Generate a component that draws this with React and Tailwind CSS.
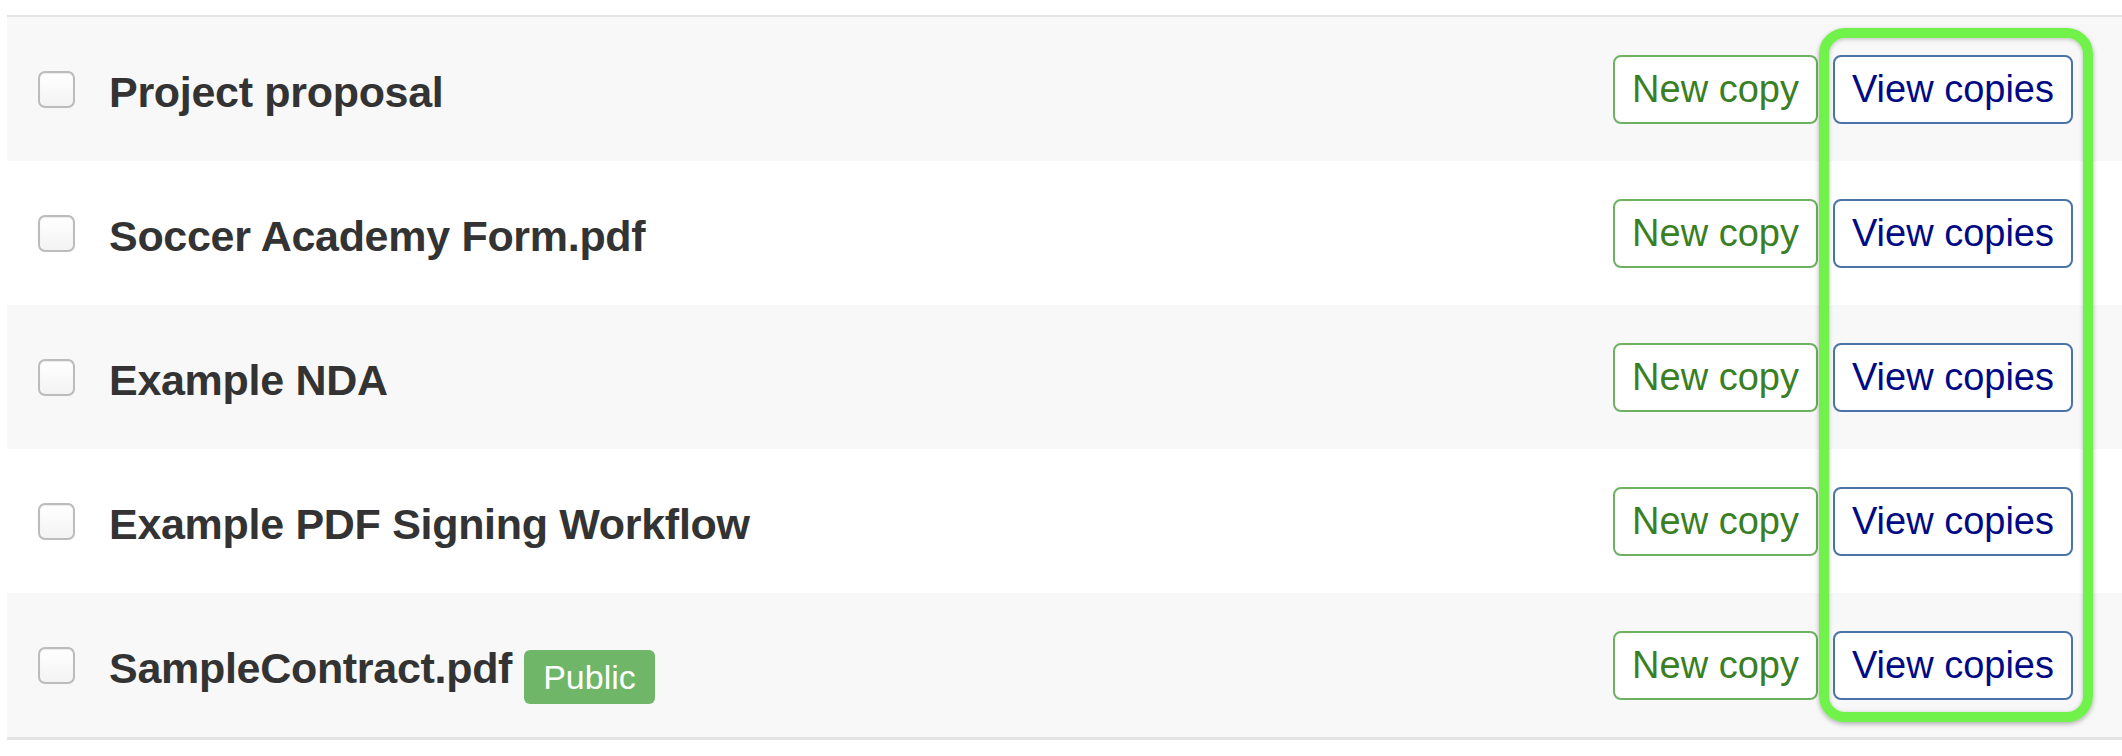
const ROWS = [
  { name: 'Project proposal', bg: 'bg-[#f8f8f8]' },
  { name: 'Soccer Academy Form.pdf', bg: 'bg-white' },
  { name: 'Example NDA', bg: 'bg-[#f8f8f8]' },
  { name: 'Example PDF Signing Workflow', bg: 'bg-white' },
  { name: 'SampleContract.pdf', bg: 'bg-[#f8f8f8]', isPublic: true },
];

function Checkbox() {
  return (
    <span className="w-[37px] h-[37px] shrink-0 rounded-[7px] border-2 border-[#bcbcbc] bg-gradient-to-b from-white to-[#f3f3f3] shadow-[inset_0_1px_1px_rgba(0,0,0,0.08)]"></span>
  );
}

export default function App() {
  return (
    <div className="relative w-[2122px] h-[756px] bg-white pt-[15px] pl-[7px] font-['Liberation_Sans',Arial,sans-serif]">
      <div className="border-t-2 border-b-[3px] border-[#e4e4e4]">
        {ROWS.map((row, i) => (
          <div key={i} className={`h-[144px] flex items-center pl-[31px] pr-[49px] ${row.bg}`}>
            <Checkbox />
            <div className="ml-[34px] flex items-baseline gap-[12px] translate-y-[3px]">
              <span className="text-[43px] font-bold text-[#333333] tracking-[-0.3px]">{row.name}</span>
              {row.isPublic && (
                <span className="inline-flex items-center h-[54px] px-[19px] rounded-[6px] bg-[#70b668] text-white text-[34px] leading-none translate-y-[6px]">
                  Public
                </span>
              )}
            </div>
            <div className="ml-auto flex items-center gap-[15px]">
              <button className="h-[69px] px-[17px] rounded-[8px] border-2 border-[#6db35f] bg-white text-[#3a7f24] text-[38px] leading-none">
                New copy
              </button>
              <button className="h-[69px] px-[17px] rounded-[8px] border-2 border-[#4a73a8] bg-white text-[#000a84] text-[38px] leading-none">
                View copies
              </button>
            </div>
          </div>
        ))}
      </div>
      <div className="absolute left-[1819px] top-[28px] w-[274px] h-[694px] rounded-[26px] border-[10px] border-[#70f24a] shadow-[0_2px_5px_rgba(0,0,0,0.3),inset_0_1px_4px_rgba(0,0,0,0.25)] pointer-events-none"></div>
    </div>
  );
}
